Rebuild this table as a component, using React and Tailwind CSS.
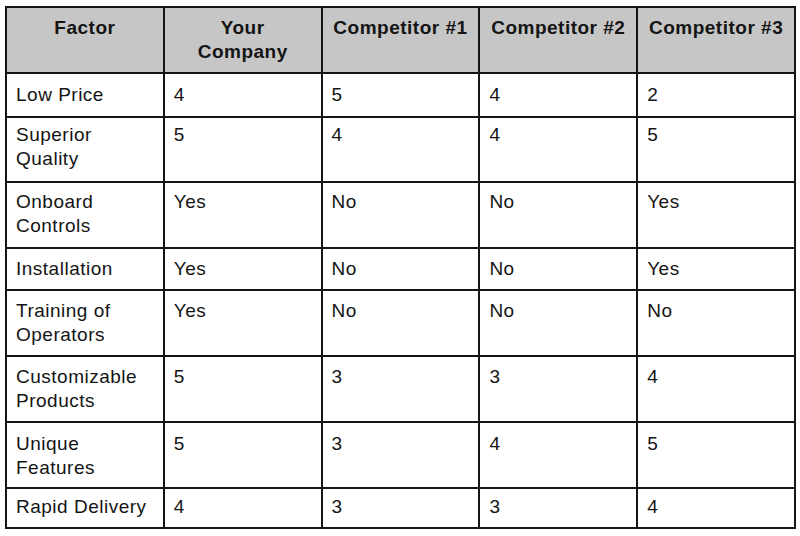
import React from "react";

const rows = [
  { pt: "pt-[9px]", cells: ["Low Price", "4", "5", "4", "2"] },
  { pt: "pt-[5px]", cells: [["Superior", "Quality"], "5", "4", "4", "5"] },
  { pt: "pt-[7px]", cells: [["Onboard", "Controls"], "Yes", "No", "No", "Yes"] },
  { pt: "pt-[8px]", cells: ["Installation", "Yes", "No", "No", "Yes"] },
  { pt: "pt-[8px]", cells: [["Training of", "Operators"], "Yes", "No", "No", "No"] },
  { pt: "pt-[8px]", cells: [["Customizable", "Products"], "5", "3", "3", "4"] },
  { pt: "pt-[9px]", cells: [["Unique", "Features"], "5", "3", "4", "5"] },
  { pt: "pt-[6px]", cells: ["Rapid Delivery", "4", "3", "3", "4"] },
];

function Text({ v }) {
  if (Array.isArray(v)) {
    return (
      <>
        {v[0]}
        <br />
        {v[1]}
      </>
    );
  }
  return v;
}

export default function App() {
  return (
    <div className="w-[800px] h-[536px] bg-white pl-[5px] pt-[6px] overflow-hidden">
      <div
        className="grid w-[791px] grid-cols-5 grid-rows-[64px_42px_63px_64px_40px_64px_64px_64px_38px] gap-[2px] p-[2px] bg-[#151515] text-[19px] leading-[24px] tracking-[0.5px] text-[#141414]"
        style={{ fontFamily: '"Liberation Sans", Arial, sans-serif' }}
      >
        <div className="bg-[#c6c6c6] pt-[8px] text-center font-bold">Factor</div>
        <div className="bg-[#c6c6c6] pt-[8px] text-center font-bold">
          Your
          <br />
          Company
        </div>
        <div className="bg-[#c6c6c6] pt-[8px] text-center font-bold">Competitor #1</div>
        <div className="bg-[#c6c6c6] pt-[8px] text-center font-bold">Competitor #2</div>
        <div className="bg-[#c6c6c6] pt-[8px] text-center font-bold">Competitor #3</div>
        {rows.map((r, i) =>
          r.cells.map((c, j) => (
            <div key={i + "-" + j} className={"bg-white pl-[9px] " + r.pt}>
              <Text v={c} />
            </div>
          ))
        )}
      </div>
    </div>
  );
}
